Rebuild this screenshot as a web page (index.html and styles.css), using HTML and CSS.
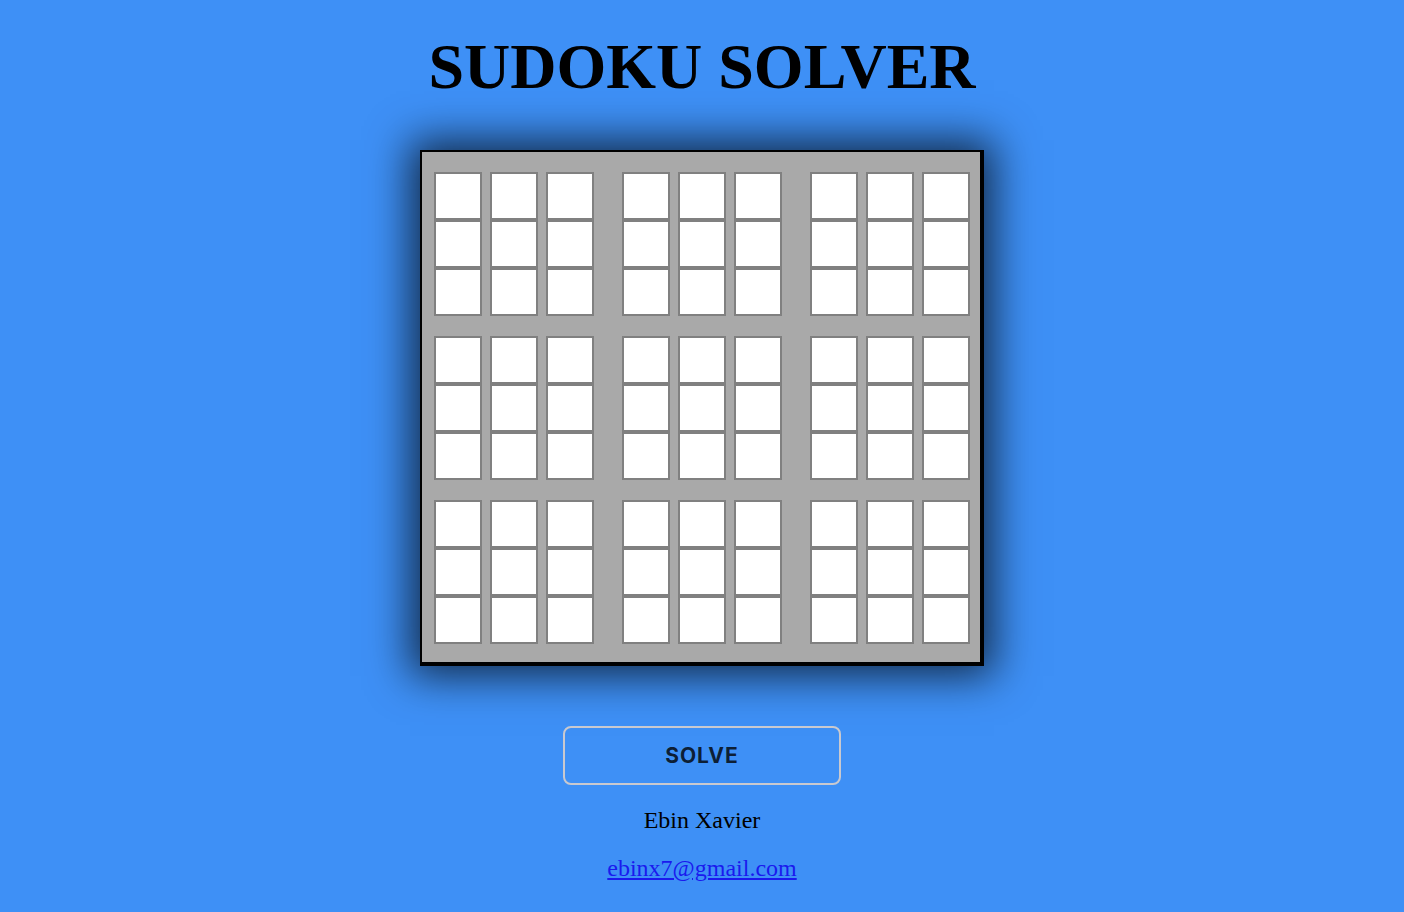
FILE: index.html
```html
<!DOCTYPE html>
<html lang="en">
<head>
<meta charset="utf-8">
<title>Sudoku Solver</title>
<link rel="stylesheet" href="styles.css">
</head>
<body>
<main class="page">
  <h1 class="title">SUDOKU SOLVER</h1>
  <div class="board" id="board"></div>
  <button class="solve-btn" type="button">SOLVE</button>
  <p class="author">Ebin Xavier</p>
  <a class="email" href="mailto:ebinx7@gmail.com">ebinx7@gmail.com</a>
</main>
<script src="script.js"></script>
</body>
</html>
```
FILE: styles.css
```css
* { box-sizing: border-box; }

html, body {
  margin: 0;
  padding: 0;
}

body {
  background: #3e90f6;
  font-family: "Liberation Serif", "Times New Roman", serif;
  min-height: 912px;
}

.page {
  display: flex;
  flex-direction: column;
  align-items: center;
}

.title {
  margin: 35px 0 0;
  font-size: 64px;
  line-height: 64px;
  font-weight: bold;
  color: #000;
}

.board {
  margin-top: 51px;
  width: 564px;
  background: #a9a9a9;
  border-style: solid;
  border-color: #000;
  border-width: 2px 4px 4px 2px;
  padding: 20px 10px 18px 12px;
  box-shadow: 0 0 40px 10px rgba(0, 0, 0, 0.7);
  display: grid;
  grid-template-columns: repeat(3, 160px);
  column-gap: 28px;
  row-gap: 20px;
}

.box {
  display: grid;
  grid-template-columns: repeat(3, 48px);
  grid-auto-rows: 48px;
  column-gap: 8px;
}

.cell {
  width: 48px;
  height: 48px;
  margin: 0;
  padding: 0;
  border: 2px solid #808080;
  background: #fff;
  text-align: center;
  font-size: 24px;
  font-family: "Liberation Sans", Arial, sans-serif;
  outline: none;
}

.solve-btn {
  margin-top: 60px;
  width: 278px;
  height: 59px;
  background: transparent;
  border: 2px solid #c9c9cf;
  border-radius: 8px;
  font-family: Inter, "Liberation Sans", Arial, sans-serif;
  font-weight: 700;
  font-size: 21px;
  letter-spacing: 1px;
  color: rgba(0, 0, 0, 0.8);
  cursor: pointer;
}

.author {
  margin: 22px 0 0;
  font-size: 24px;
  color: #000;
}

.email {
  margin-top: 21px;
  font-size: 24px;
  color: #1a1aee;
}
```
FILE: script.js
```js
// Build the 3x3 grid of boxes, each holding 3x3 input cells.
const board = document.getElementById('board');
for (let b = 0; b < 9; b++) {
  const box = document.createElement('div');
  box.className = 'box';
  for (let c = 0; c < 9; c++) {
    const input = document.createElement('input');
    input.className = 'cell';
    input.type = 'text';
    input.maxLength = 1;
    box.appendChild(input);
  }
  board.appendChild(box);
}
```
